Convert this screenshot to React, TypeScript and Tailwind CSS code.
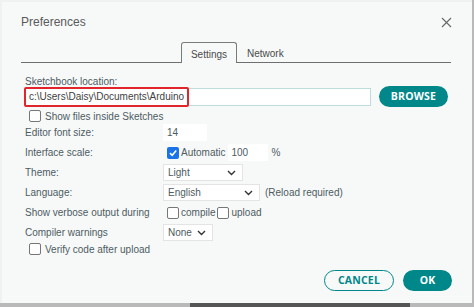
import React from "react";

const Check = ({ checked = false }: { checked?: boolean }) =>
  checked ? (
    <span className="inline-flex w-[12px] h-[12px] rounded-[2px] bg-[#1a73e8] items-center justify-center">
      <svg width="10" height="10" viewBox="0 0 10 10">
        <path d="M2 5.2 L4.2 7.3 L8.2 2.6" stroke="white" strokeWidth="1.6" fill="none" />
      </svg>
    </span>
  ) : (
    <span className="inline-block w-[12px] h-[12px] rounded-[2px] border border-[#767676] bg-white" />
  );

const Chevron = () => (
  <svg width="9" height="6" viewBox="0 0 9 6">
    <path d="M1 1 L4.5 4.5 L8 1" stroke="#333" strokeWidth="1.4" fill="none" />
  </svg>
);

const Select = ({ value, width }: { value: string; width: string }) => (
  <div className={`${width} h-[17px] bg-white border border-[#e4e4e4] flex items-center justify-between pl-[4px] pr-[6px]`}>
    <span>{value}</span>
    <Chevron />
  </div>
);

export default function App() {
  return (
    <div
      className="w-[474px] h-[307px] bg-[#b9b9b9] relative overflow-hidden text-[10px] leading-[13px] text-[#4e5b61]"
      style={{ fontFamily: "'Liberation Sans', Arial, sans-serif" }}
    >
      <div className="absolute left-0 top-0 w-[472px] h-[303px] bg-[#f7f9f9] border-l-[2px] border-t-[2px] border-[#f0f2f2]">
        <div className="flex items-center justify-between pl-[19px] pr-[20px] pt-[10px] h-[30px]">
          <span className="text-[12px] text-[#5a5a5a]">Preferences</span>
          <svg width="11" height="11" viewBox="0 0 11 11">
            <path d="M1 1 L10 10 M10 1 L1 10" stroke="#666" strokeWidth="1.1" />
          </svg>
        </div>
        <div className="flex">
          <div className="flex-1 pl-[19px]">
            <div className="mt-[11px] w-[430px] h-[20px] border-b border-[#6f6f6f] flex items-end pl-[160px]">
              <div className="h-[21px] w-[56px] border border-b-0 border-[#7a7a7a] rounded-t-[3px] bg-[#f7f9f9] flex items-center justify-center mb-[-1px] pt-[3px] text-[#4a4a4a]">
                Settings
              </div>
              <div className="h-[20px] pl-[10px] pt-[3px] flex items-center text-[#4a4a4a]">Network</div>
            </div>
            <div className="pl-[4px] pt-[12px]">
              <div className="h-[13px]">Sketchbook location:</div>
              <div className="flex items-center mt-[-2px]">
                <div className="relative w-[346px] h-[18px] bg-white border border-[#bcdcdd] flex items-center pl-[3px]">
                  <span className="text-[#3f3f3f]">c:\Users\Daisy\Documents\Arduino</span>
                  <div className="absolute left-[-2px] top-[-2px] w-[165px] h-[20px] border-[2px] border-[#e0262b] rounded-[2px]" />
                </div>
                <div className="ml-[8px] w-[69px] h-[21px] rounded-full bg-[#00878a] text-white font-bold text-[10.5px] flex items-center justify-center tracking-[0.2px]" style={{ fontFamily: "'Open Sans', sans-serif" }}>
                  BROWSE
                </div>
              </div>
              <div className="flex items-center gap-[4px] pl-[4px] mt-[2px] h-[14px]">
                <Check />
                <span>Show files inside Sketches</span>
              </div>
              <div className="grid grid-cols-[138px_1fr] auto-rows-[17px] items-center gap-y-[3px] mt-[1px]">
                <span>Editor font size:</span>
                <div className="w-[44px] h-[17px] bg-white pl-[4px] flex items-center">14</div>
                <span>Interface scale:</span>
                <div className="flex items-center h-[17px]">
                  <span className="ml-[4px] flex"><Check checked /></span>
                  <span className="ml-[2px]">Automatic</span>
                  <div className="ml-[3px] w-[40px] h-[17px] bg-white pl-[3px] flex items-center">100</div>
                  <span className="ml-[3px]">%</span>
                </div>
                <span>Theme:</span>
                <Select value="Light" width="w-[80px]" />
                <span>Language:</span>
                <div className="flex items-center">
                  <Select value="English" width="w-[97px]" />
                  <span className="ml-[5px]">(Reload required)</span>
                </div>
                <span>Show verbose output during</span>
                <div className="flex items-center h-[17px]">
                  <span className="ml-[4px] flex"><Check /></span>
                  <span className="ml-[2px]">compile</span>
                  <span className="ml-[2px] flex"><Check /></span>
                  <span className="ml-[2px]">upload</span>
                </div>
                <span>Compiler warnings</span>
                <Select value="None" width="w-[50px]" />
              </div>
              <div className="flex items-center gap-[4px] pl-[4px] mt-[1px] h-[14px]">
                <Check />
                <span>Verify code after upload</span>
              </div>
            </div>
          </div>
          <div className="w-[5px] h-[128px] bg-[#c9c9c9] mt-[12px] mr-[21px]" />
        </div>
        <div className="absolute right-[20px] top-[268px] flex gap-[9px]" style={{ fontFamily: "'Open Sans', sans-serif" }}>
          <div className="w-[70px] h-[21px] rounded-full border-[1.5px] border-[#00878a] text-[#00878a] font-bold text-[10.5px] flex items-center justify-center tracking-[0.2px]">
            CANCEL
          </div>
          <div className="w-[49px] h-[21px] rounded-full bg-[#00878a] text-white font-bold text-[10.5px] flex items-center justify-center">
            OK
          </div>
        </div>
      </div>
      <div className="absolute left-[190px] top-[303px] w-[220px] h-[4px] bg-[#555]" />
    </div>
  );
}
